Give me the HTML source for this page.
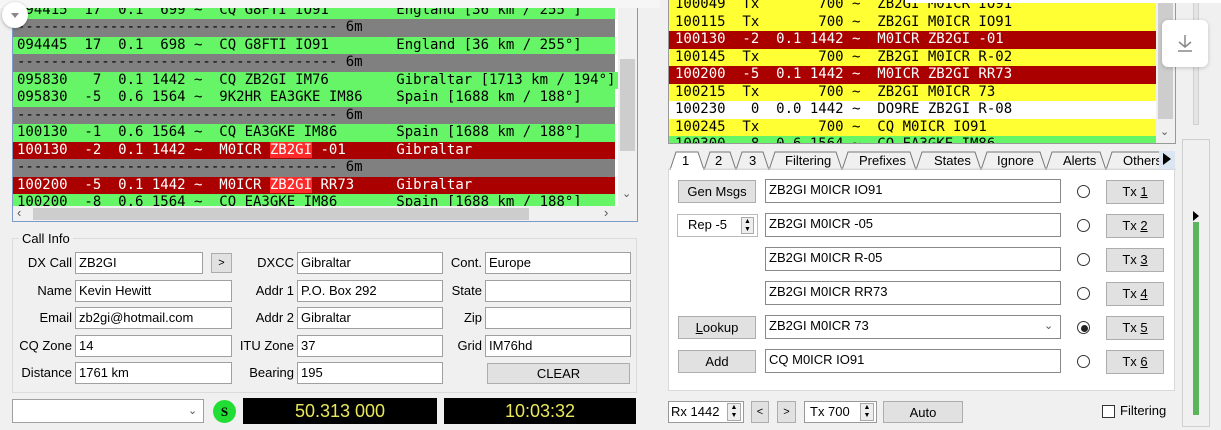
<!DOCTYPE html>
<html><head><meta charset="utf-8">
<style>
*{box-sizing:border-box;margin:0;padding:0}
body{width:1221px;height:430px;overflow:hidden;background:#f0f0f0;font-family:"Liberation Sans",Arial,sans-serif;font-size:13px;color:#000;position:relative}
.a{position:absolute}
.list{position:absolute;background:#fff;border:1px solid #7a9cc6;overflow:hidden}
.row{position:absolute;left:0;height:17.5px;line-height:17.5px;font-family:"DejaVu Sans Mono","Liberation Mono",monospace;font-size:14px;white-space:pre;padding-left:4px;color:#000}
.g{background:#66f566}.s{background:#808080}.r{background:#aa0000;color:#fff}.y{background:#ffff33}.w{background:#fff}
.hl{background:#ff2a2a}
.inp{position:absolute;background:#fff;border:1px solid #a0a0a0;height:22px;line-height:20px;padding-left:3px;font-size:13px;white-space:nowrap;overflow:hidden}
.lbl{position:absolute;text-align:right;font-size:13px;line-height:22px}
.btn{position:absolute;background:#e1e1e1;border:1px solid #adadad;text-align:center;font-size:13px;line-height:21px}
.radio{position:absolute;width:13px;height:13px;border:1px solid #333;border-radius:50%;background:#fff}
.sb{position:absolute;background:#f0f0f0}
</style></head><body>

<div class="a" style="left:0;top:0;width:660px;height:8px;background:#f6f6f6;z-index:5"></div>
<div class="a" style="left:905px;top:0;width:316px;height:3px;background:#fff;z-index:5"></div>
<div class="a" style="left:2px;top:2px;width:26px;height:26px;border-radius:50%;background:#fff;box-shadow:0 1px 3px rgba(0,0,0,.3);z-index:6"></div>
<div class="a" style="left:11px;top:13px;width:0;height:0;border-left:4px solid transparent;border-right:4px solid transparent;border-top:5px solid #888;z-index:7"></div>

<div class="list" style="left:12px;top:0;width:626px;height:222px">
  <div class="a" style="left:0;top:0;width:605px;height:205px;overflow:hidden">
    <div class="row g" style="top:0.5px;width:602px">094415  17  0.1  699 ~  CQ G8FTI IO91        England [36 km / 255°]</div>
    <div class="row s" style="top:18px;width:602px">-------------------------------------- 6m</div>
    <div class="row g" style="top:35.5px;width:602px">094445  17  0.1  698 ~  CQ G8FTI IO91        England [36 km / 255°]</div>
    <div class="row s" style="top:53px;width:602px">-------------------------------------- 6m</div>
    <div class="row g" style="top:70.5px;width:605px">095830   7  0.1 1442 ~  CQ ZB2GI IM76        Gibraltar [1713 km / 194°]</div>
    <div class="row g" style="top:88px;width:602px">095830  -5  0.6 1564 ~  9K2HR EA3GKE IM86    Spain [1688 km / 188°]</div>
    <div class="row s" style="top:105.5px;width:602px">-------------------------------------- 6m</div>
    <div class="row g" style="top:123px;width:602px">100130  -1  0.6 1564 ~  CQ EA3GKE IM86       Spain [1688 km / 188°]</div>
    <div class="row r" style="top:140.5px;width:602px">100130  -2  0.1 1442 ~  M0ICR <span class="hl">ZB2GI</span> -01      Gibraltar</div>
    <div class="row s" style="top:158px;width:602px">-------------------------------------- 6m</div>
    <div class="row r" style="top:175.5px;width:602px">100200  -5  0.1 1442 ~  M0ICR <span class="hl">ZB2GI</span> RR73     Gibraltar</div>
    <div class="row g" style="top:193px;width:602px">100200  -8  0.6 1564 ~  CQ EA3GKE IM86       Spain [1688 km / 188°]</div>
  </div>
  <div class="sb" style="left:605px;top:0;width:19px;height:205px"></div>
  <div class="a" style="left:607px;top:58px;width:15px;height:92px;background:#cdcdcd"></div>
  <div class="a" style="left:609px;top:186px;font-size:11px;color:#555">&#8964;</div>
  <div class="sb" style="left:0;top:205px;width:624px;height:16px"></div>
  <div class="a" style="left:20px;top:207px;width:496px;height:12px;background:#cdcdcd"></div>
  <div class="a" style="left:4px;top:204px;font-size:13px;color:#555">&#8249;</div>
  <div class="a" style="left:591px;top:204px;font-size:13px;color:#555">&#8250;</div>
</div>

<div class="a" style="left:12px;top:238px;width:625px;height:155px;border:1px solid #dcdcdc"></div>
<div class="a" style="left:19px;top:231px;padding:0 3px;background:#f0f0f0;font-size:13px">Call Info</div>

<div class="lbl" style="left:10px;top:252px;width:62px">DX Call</div>
<div class="inp" style="left:75px;top:252px;width:128px">ZB2GI</div>
<div class="btn" style="left:211px;top:253px;width:21px;height:20px;line-height:18px;font-size:11px">&gt;</div>
<div class="lbl" style="left:10px;top:280px;width:62px">Name</div>
<div class="inp" style="left:75px;top:280px;width:157px">Kevin Hewitt</div>
<div class="lbl" style="left:10px;top:307px;width:62px">Email</div>
<div class="inp" style="left:75px;top:307px;width:157px">zb2gi@hotmail.com</div>
<div class="lbl" style="left:10px;top:335px;width:62px">CQ Zone</div>
<div class="inp" style="left:75px;top:335px;width:157px">14</div>
<div class="lbl" style="left:10px;top:362px;width:62px">Distance</div>
<div class="inp" style="left:75px;top:362px;width:157px">1761 km</div>

<div class="lbl" style="left:230px;top:252px;width:64px">DXCC</div>
<div class="inp" style="left:297px;top:252px;width:146px">Gibraltar</div>
<div class="lbl" style="left:230px;top:280px;width:64px">Addr 1</div>
<div class="inp" style="left:297px;top:280px;width:146px">P.O. Box 292</div>
<div class="lbl" style="left:230px;top:307px;width:64px">Addr 2</div>
<div class="inp" style="left:297px;top:307px;width:146px">Gibraltar</div>
<div class="lbl" style="left:230px;top:335px;width:64px">ITU Zone</div>
<div class="inp" style="left:297px;top:335px;width:146px">37</div>
<div class="lbl" style="left:230px;top:362px;width:64px">Bearing</div>
<div class="inp" style="left:297px;top:362px;width:146px">195</div>

<div class="lbl" style="left:440px;top:252px;width:42px">Cont.</div>
<div class="inp" style="left:485px;top:252px;width:146px">Europe</div>
<div class="lbl" style="left:440px;top:280px;width:42px">State</div>
<div class="inp" style="left:485px;top:280px;width:146px"></div>
<div class="lbl" style="left:440px;top:307px;width:42px">Zip</div>
<div class="inp" style="left:485px;top:307px;width:146px"></div>
<div class="lbl" style="left:440px;top:335px;width:42px">Grid</div>
<div class="inp" style="left:485px;top:335px;width:146px">IM76hd</div>
<div class="btn" style="left:487px;top:363px;width:143px;height:21px;line-height:19px">CLEAR</div>

<div class="inp" style="left:12px;top:399px;width:192px;height:24px"></div>
<div class="a" style="left:188px;top:404px;font-size:11px;color:#555">&#8964;</div>
<div class="a" style="left:213px;top:400px;width:23px;height:23px;border-radius:50%;background:#22dd33;color:#000;font-family:'Liberation Serif',serif;font-weight:bold;font-size:13px;text-align:center;line-height:23px">S</div>
<div class="a" style="left:243px;top:398px;width:194px;height:26px;background:#000;color:#e8e85a;font-size:18px;text-align:center;line-height:26px">50.313 000</div>
<div class="a" style="left:444px;top:398px;width:192px;height:26px;background:#000;color:#e8e85a;font-size:18px;text-align:center;line-height:26px">10:03:32</div>

<div class="list" style="left:668px;top:-2px;width:508px;height:146px;border-color:#999">
  <div class="a" style="left:0;top:0;width:487px;height:144px;overflow:hidden">
    <div class="row y" style="top:-3px;width:487px;padding-left:6px">100049  Tx       700 ~  ZB2GI M0ICR IO91</div>
    <div class="row y" style="top:14.5px;width:487px;padding-left:6px">100115  Tx       700 ~  ZB2GI M0ICR IO91</div>
    <div class="row r" style="top:32px;width:487px;padding-left:6px">100130  -2  0.1 1442 ~  M0ICR ZB2GI -01</div>
    <div class="row y" style="top:49.5px;width:487px;padding-left:6px">100145  Tx       700 ~  ZB2GI M0ICR R-02</div>
    <div class="row r" style="top:67px;width:487px;padding-left:6px">100200  -5  0.1 1442 ~  M0ICR ZB2GI RR73</div>
    <div class="row y" style="top:84.5px;width:487px;padding-left:6px">100215  Tx       700 ~  ZB2GI M0ICR 73</div>
    <div class="row w" style="top:102px;width:487px;padding-left:6px">100230   0  0.0 1442 ~  DO9RE ZB2GI R-08</div>
    <div class="row y" style="top:119.5px;width:487px;padding-left:6px">100245  Tx       700 ~  CQ M0ICR IO91</div>
    <div class="row g" style="top:137px;width:487px;padding-left:6px">100300  -8  0.6 1564 ~  CQ EA3GKE IM86</div>
  </div>
  <div class="sb" style="left:487px;top:0;width:19px;height:144px"></div>
  <div class="a" style="left:489px;top:2px;width:15px;height:118px;background:#cdcdcd"></div>
  <div class="a" style="left:491px;top:126px;font-size:11px;color:#555">&#8964;</div>
</div>

<div class="a" style="left:668px;top:169px;width:507px;height:222px;background:#fff;border:1px solid #d9d9d9"></div>
<svg class="a" style="left:660px;top:148px" width="520" height="24">
  <path d="M10 22 L16 4 L38 4 L44 22" fill="#fff" stroke="#777" stroke-width="1"/>
  <path d="M44 22 L50 4 L70 4 L76 22 M76 22 L82 4 L103 4 L109 22 M109 22 L115 4 L176 4 L182 22 M182 22 L188 4 L250 4 L256 22 M256 22 L262 4 L315 4 L321 22 M321 22 L327 4 L380 4 L386 22 M386 22 L392 4 L440 4 L446 22 M446 22 L452 4 L510 4 L514 12" fill="none" stroke="#777" stroke-width="1"/>
  <path d="M8 21 L516 21" stroke="#d9d9d9"/>
  <path d="M11 21 L43 21" stroke="#fff" stroke-width="2"/>
</svg>
<div class="a" style="left:670px;top:153px;width:505px;font-size:13px;line-height:16px;white-space:nowrap">
  <span class="a" style="left:12px">1</span>
  <span class="a" style="left:45px">2</span>
  <span class="a" style="left:79px">3</span>
  <span class="a" style="left:115px">Filtering</span>
  <span class="a" style="left:189px">Prefixes</span>
  <span class="a" style="left:264px">States</span>
  <span class="a" style="left:327px">Ignore</span>
  <span class="a" style="left:393px">Alerts</span>
  <span class="a" style="left:453px">Others</span>
</div>
<div class="a" style="left:1159px;top:151px;width:16px;height:18px;background:#dbe6f2"></div>
<div class="a" style="left:1163px;top:153px;width:0;height:0;border-top:6px solid transparent;border-bottom:6px solid transparent;border-left:8px solid #000"></div>

<div class="btn" style="left:678px;top:180px;width:78px;height:23px">Gen Msgs</div>
<div class="inp" style="left:765px;top:179px;width:296px;height:24px;border-color:#888">ZB2GI M0ICR IO91</div>
<div class="radio" style="left:1077px;top:185px"></div>
<div class="btn" style="left:1106px;top:180px;width:58px;height:24px">Tx <u>1</u></div>

<div class="inp" style="left:677px;top:214px;width:81px;height:23px;border-color:#bbb;text-align:left;padding-left:10px">Rep -5</div>
<div class="a" style="left:741px;top:217px;width:13px;height:17px;border:1px solid #aaa;background:#eee;font-size:7px;line-height:8px;text-align:center">▲<br>▼</div>
<div class="inp" style="left:765px;top:213px;width:296px;height:24px;border-color:#888">ZB2GI M0ICR -05</div>
<div class="radio" style="left:1077px;top:219px"></div>
<div class="btn" style="left:1106px;top:214px;width:58px;height:24px">Tx <u>2</u></div>

<div class="inp" style="left:765px;top:247px;width:296px;height:24px;border-color:#888">ZB2GI M0ICR R-05</div>
<div class="radio" style="left:1077px;top:253px"></div>
<div class="btn" style="left:1106px;top:248px;width:58px;height:24px">Tx <u>3</u></div>

<div class="inp" style="left:765px;top:281px;width:296px;height:24px;border-color:#888">ZB2GI M0ICR RR73</div>
<div class="radio" style="left:1077px;top:287px"></div>
<div class="btn" style="left:1106px;top:282px;width:58px;height:24px">Tx <u>4</u></div>

<div class="btn" style="left:678px;top:316px;width:78px;height:23px"><u>L</u>ookup</div>
<div class="inp" style="left:765px;top:315px;width:296px;height:24px;border-color:#888">ZB2GI M0ICR 73</div>
<div class="a" style="left:1044px;top:319px;font-size:11px;color:#555">&#8964;</div>
<div class="radio" style="left:1077px;top:321px"></div>
<div class="a" style="left:1081px;top:325px;width:7px;height:7px;border-radius:50%;background:#222"></div>
<div class="btn" style="left:1106px;top:316px;width:58px;height:24px">Tx <u>5</u></div>

<div class="btn" style="left:678px;top:350px;width:78px;height:23px">Add</div>
<div class="inp" style="left:765px;top:349px;width:296px;height:24px;border-color:#888">CQ M0ICR IO91</div>
<div class="radio" style="left:1077px;top:355px"></div>
<div class="btn" style="left:1106px;top:350px;width:58px;height:24px">Tx <u>6</u></div>

<div class="inp" style="left:668px;top:401px;width:76px;height:22px;border-color:#999;padding-left:2px">Rx 1442</div>
<div class="a" style="left:727px;top:403px;width:14px;height:18px;border:1px solid #aaa;background:#eee;font-size:7px;line-height:8px;text-align:center">▲<br>▼</div>
<div class="btn" style="left:751px;top:401px;width:18px;height:22px;font-size:11px">&lt;</div>
<div class="btn" style="left:777px;top:401px;width:19px;height:22px;font-size:11px">&gt;</div>
<div class="inp" style="left:804px;top:401px;width:73px;height:22px;border-color:#999;padding-left:5px">Tx 700</div>
<div class="a" style="left:860px;top:403px;width:14px;height:18px;border:1px solid #aaa;background:#eee;font-size:7px;line-height:8px;text-align:center">▲<br>▼</div>
<div class="btn" style="left:883px;top:401px;width:80px;height:22px">Auto</div>
<div class="a" style="left:1102px;top:405px;width:13px;height:13px;border:1px solid #333;background:#fff"></div>
<div class="a" style="left:1120px;top:403px;font-size:13px">Filtering</div>

<div class="a" style="left:1193px;top:0;width:6px;height:125px;background:#e4e4e4;border:1px solid #d0d0d0"></div>
<div class="a" style="left:1162px;top:20px;width:46px;height:47px;background:#fff;border-radius:6px;box-shadow:0 1px 4px rgba(0,0,0,.2)"></div>
<svg class="a" style="left:1176px;top:33px" width="18" height="20"><path d="M9 2 V14 M3 9 L9 14 L15 9 M2 18 H16" fill="none" stroke="#888" stroke-width="1.5"/></svg>
<div class="a" style="left:1182px;top:139px;width:28px;height:288px;border:1px solid #cfcfcf;background:#f0f0f0"></div>
<div class="a" style="left:1193px;top:222px;width:6px;height:193px;background:#5cb55c"></div>
<div class="a" style="left:1193px;top:211px;width:0;height:0;border-top:5px solid transparent;border-bottom:5px solid transparent;border-left:6px solid #000"></div>
</body></html>
